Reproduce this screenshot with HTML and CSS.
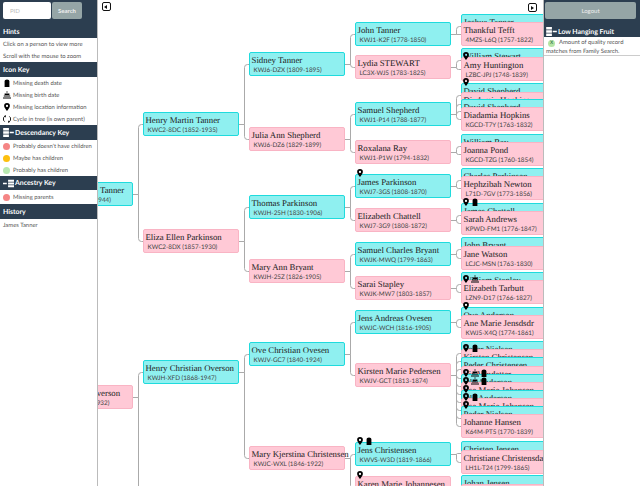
FILE: index.html
```html
<!DOCTYPE html>
<html lang="en">
<head>
    <meta charset="UTF-8">
    <title>Relative Finder</title>
    <link rel="stylesheet" href="styles.css">
</head>
<body>
    <svg class="sprite" xmlns="http://www.w3.org/2000/svg">
        <symbol id="i-pin" viewBox="0 0 8 10"><path fill-rule="evenodd" d="M4 0a3.6 3.6 0 0 1 3.6 3.6C7.600 5.800 5.200 8 4 10 2.800 8 .4 5.800 .4 3.600A3.600 3.600 0 0 1 4 0zm0 2.200a1.400 1.400 0 1 0 0 2.800 1.400 1.400 0 0 0 0-2.800z"/></symbol>
        <symbol id="i-death" viewBox="0 0 8 10"><path d="M1 10V2.500Q1 .5 4 .5t3 2V10z"/></symbol>
        <symbol id="i-birth" viewBox="0 0 10 10"><path d="M4.600 0h.8v2.500h-.8zM2 3h6v2H2zM1 5.500h8v1.500H1zM0 8h10v1.500H0z"/></symbol>
        <symbol id="i-cycle" viewBox="0 0 10 10"><path fill="none" stroke="#000" stroke-width="1.200" d="M2 8.200A4 4 0 0 1 2 1.800M8 1.800A4 4 0 0 1 8 8.200"/><path d="M3.500 0v3L1 1.500zM6.500 10V7L9 8.500z"/></symbol>
        <symbol id="i-desc" viewBox="0 0 13 11"><path d="M0 0h7v3H0zM0 4h7v3H0zM0 8h7v3H0zM8 4.500h5v1.800H8z"/></symbol>
        <symbol id="i-anc" viewBox="0 0 13 9"><path d="M0 3.600h4.500v1.800H0zM6 0h7v2.500H6zM6 3.300h7v2.500H6zM6 6.500h7V9H6z"/></symbol>
    </svg>

    <div class="app">
        <aside class="sidebar sidebar-left">
            <div class="search">
                <input class="pid" type="text" placeholder="PID">
                <button class="btn">Search</button>
            </div>
            <h3 class="heading heading-hints">Hints</h3>
            <ul class="rows">
                <li>Click on a person to view more</li>
                <li>Scroll with the mouse to zoom</li>
            </ul>
            <h3 class="heading">Icon Key</h3>
            <ul class="rows">
                <li><svg class="key-icon"><use href="#i-death"/></svg>Missing death date</li>
                <li><svg class="key-icon"><use href="#i-birth"/></svg>Missing birth date</li>
                <li><svg class="key-icon"><use href="#i-pin"/></svg>Missing location information</li>
                <li><svg class="key-icon"><use href="#i-cycle"/></svg>Cycle in tree (is own parent)</li>
            </ul>
            <h3 class="heading"><svg class="head-icon"><use href="#i-desc"/></svg>Descendancy Key</h3>
            <ul class="rows">
                <li><span class="dot red"></span>Probably doesn't have children</li>
                <li><span class="dot yellow"></span>Maybe has children</li>
                <li><span class="dot green"></span>Probably has children</li>
            </ul>
            <h3 class="heading heading-ancestry"><svg class="head-icon"><use href="#i-anc"/></svg>Ancestry Key</h3>
            <ul class="rows rows-ancestry">
                <li><span class="dot red"></span>Missing parents</li>
            </ul>
            <h3 class="heading">History</h3>
            <ul class="rows">
                <li>James Tanner</li>
            </ul>
        </aside>

        <main class="canvas" id="canvas">
            <svg class="links" id="links"></svg>
            <button class="pager pager-left"></button>
            <button class="pager pager-right"></button>
        </main>

        <aside class="sidebar sidebar-right">
            <div class="search">
                <button class="btn btn-wide">Logout</button>
            </div>
            <h3 class="heading heading-fruit"><svg class="head-icon"><use href="#i-desc"/></svg>Low Hanging Fruit</h3>
            <p class="fruit"><span class="fruit-badge">X</span>Amount of quality record matches from Family Search.</p>
        </aside>
    </div>

    <script src="tree.js"></script>
</body>
</html>
```

FILE: styles.css
```css
* {
    margin: 0;
    padding: 0;
    box-sizing: border-box;
}

body {
    background: #fff;
    font-family: "Lato", sans-serif;
    text-rendering: geometricPrecision;
    overflow: hidden;
}

.sprite {
    display: none;
}

.app {
    display: flex;
    width: 640px;
    height: 486px;
}

/* Sidebars */
.sidebar {
    flex: none;
    width: 97px;
    background: #fff;
    color: #555;
    font-size: 5.900px;
}

.sidebar-left {
    width: 98px;
    border-right: 1px solid #bbb;
}

.sidebar-right {
    border-left: 1px solid #bbb;
}

.search {
    display: flex;
    gap: 1px;
    height: 26px;
    padding: 2px 3px 0;
    background: #2c3e50;
}

.sidebar-right .search {
    padding: 2px 3px 0 1px;
}

.pid {
    width: 48px;
    height: 17px;
    padding-left: 7px;
    border: 0;
    border-radius: 2px;
    background: #fff;
    font: 6px "Lato", sans-serif;
}

.pid::placeholder {
    color: #bbb;
}

.btn {
    width: 30px;
    height: 17px;
    border: 0;
    border-radius: 2px;
    background: #95a5a6;
    color: #eee;
    font: bold 6px "Lato", sans-serif;
}

.btn-wide {
    width: 91px;
    font-weight: 400;
}

.heading {
    display: flex;
    align-items: center;
    height: 15px;
    padding-left: 3px;
    background: #2c3e50;
    color: #fff;
    font-size: 6.900px;
    font-weight: 700;
}

.heading-hints {
    height: 12px;
}

.heading-ancestry {
    height: 14px;
}

.heading-fruit {
    height: 11px;
    padding-left: 2px;
}

.head-icon {
    flex: none;
    width: 11px;
    height: 9px;
    margin-right: 1px;
    fill: #fff;
}

.rows {
    list-style: none;
    padding-left: 3px;
}

.rows li {
    display: flex;
    align-items: center;
    height: 12px;
    white-space: nowrap;
}

.rows-ancestry li {
    height: 14px;
}

.key-icon {
    flex: none;
    width: 8px;
    height: 8px;
    margin-right: 2px;
}

.dot {
    flex: none;
    width: 7px;
    height: 7px;
    margin-right: 3px;
    border-radius: 50%;
}

.red {
    background: #f58585;
}

.yellow {
    background: #fdc00f;
}

.green {
    background: #b8e8b0;
}

.fruit {
    height: 19px;
    padding: 1px 0 0 2px;
    line-height: 9.400px;
    border-bottom: 1px solid #ccc;
}

.fruit-badge {
    display: inline-block;
    width: 7px;
    height: 7px;
    margin: 0 4px 0 2px;
    border-radius: 50%;
    background: #b5e5a5;
    color: #264;
    font-size: 5px;
    line-height: 7px;
    text-align: center;
}

/* Tree */
.canvas {
    position: relative;
    flex: 1;
    height: 486px;
    overflow: hidden;
}

.links {
    position: absolute;
    top: 0;
    left: 0;
    width: 100%;
    height: 100%;
}

.links path {
    fill: none;
    stroke: #aaa;
    stroke-width: 1;
}

.person {
    position: absolute;
    width: 96px;
    height: 24px;
    padding: 1px 0 0 1.500px;
    border: 1px solid;
    border-radius: 2px;
    white-space: nowrap;
}

.male {
    background: #8ff0f0;
    border-color: #1fdbdd;
}

.female {
    background: #ffc9d6;
    border-color: #f9b4c4;
}

.person-name {
    color: #222;
    font-family: "Liberation Serif", serif;
    font-size: 8.800px;
    line-height: 12px;
}

.person-id {
    padding-left: 2px;
    color: #444;
    font-size: 6.300px;
    line-height: 9px;
}

.badges {
    position: absolute;
    top: -6px;
    left: 0;
    display: flex;
    gap: 1px;
}

.badge {
    width: 8px;
    height: 8px;
}

.pager {
    position: absolute;
    top: 2px;
    width: 9px;
    height: 9px;
    border: 1px solid #111;
    border-radius: 2px;
    background: #fff;
}

.pager::after {
    content: "";
    position: absolute;
    top: 1.500px;
    border: 2px solid transparent;
}

.pager-left {
    left: 4px;
}

.pager-left::after {
    left: -1px;
    border-right: 3px solid #111;
}

.pager-right {
    left: 430px;
    top: 3px;
}

.pager-right::after {
    left: 2px;
    border-left: 3px solid #111;
}
```

FILE: tree.js
```js
const CANVAS_X = 98;
const GEN_X = [37, 143, 249, 355, 461];
const CARD_H = 24;

// [top, name, id, icons, parents]
const roots = [
  [182, "James Lawrence Tanner", "KWC2-8D9 (1880-1944)", "", [
    [112, "Henry Martin Tanner", "KWC2-8DC (1852-1935)", "", [
      [52, "Sidney Tanner", "KWJ6-DZX (1809-1895)", "", [
        [22, "John Tanner", "KWJ1-K2F (1778-1850)", "", [
          [14, "Joshua Tanner", "", ""],
          [22, "Thankful Tefft", "4MZS-L6Q (1757-1822)", ""],
        ]],
        [55, "Lydia STEWART", "LC3X-WJ5 (1783-1825)", "", [
          [48, "William Stewart", "", ""],
          [57, "Amy Huntington", "LZBC-JPJ (1748-1839)", "p"],
        ]],
      ]],
      [127, "Julia Ann Shepherd", "KWJ6-DZ6 (1829-1899)", "", [
        [102, "Samuel Shepherd", "KWJ1-P14 (1788-1877)", "", [
          [83, "David Shepherd", "", "p"],
          [92, "Diadamia Hopkins", "", ""],
          [99, "David Shepherd", "", ""],
          [107, "Diadamia Hopkins", "KGCD-T7Y (1763-1832)", ""],
        ]],
        [140, "Roxalana Ray", "KWJ1-P1W (1794-1832)", "", [
          [134, "William Ray", "", ""],
          [142, "Joanna Pond", "KGCD-TZG (1760-1854)", ""],
        ]],
      ]],
    ]],
    [229, "Eliza Ellen Parkinson", "KWC2-8DX (1857-1930)", "", [
      [195, "Thomas Parkinson", "KWJH-25H (1830-1906)", "", [
        [174, "James Parkinson", "KWJ7-3GS (1808-1870)", "p", [
          [168, "Charles Parkinson", "", ""],
          [176, "Hephzibah Newton", "L71D-7GV (1773-1856)", ""],
        ]],
        [208, "Elizabeth Chattell", "KWJ7-3G9 (1808-1872)", "", [
          [203, "James Chattell", "", "pd"],
          [211, "Sarah Andrews", "KPWD-FM1 (1776-1847)", ""],
        ]],
      ]],
      [259, "Mary Ann Bryant", "KWJH-25Z (1826-1905)", "", [
        [242, "Samuel Charles Bryant", "KWJK-MWQ (1799-1863)", "", [
          [237, "John Bryant", "", ""],
          [246, "Jane Watson", "LCJC-MSN (1763-1830)", ""],
        ]],
        [276, "Sarai Stapley", "KWJK-MW7 (1803-1857)", "", [
          [272, "William Stapley", "", ""],
          [280, "Elizabeth Tarbutt", "LZN9-D17 (1766-1827)", "pb"],
        ]],
      ]],
    ]],
  ]],
  [385, "Marian Annie Overson", "KWJH-XF2 (1870-1932)", "", [
    [360, "Henry Christian Overson", "KWJH-XFD (1868-1947)", "", [
      [342, "Ove Christian Ovesen", "KWJV-GC7 (1840-1924)", "", [
        [310, "Jens Andreas Ovesen", "KWJC-WCH (1816-1905)", "", [
          [307, "Ove Anderson", "", "p"],
          [315, "Ane Marie Jensdsdr", "KWJ5-X4Q (1774-1861)", ""],
        ]],
        [363, "Kirsten Marie Pedersen", "KWJV-GCT (1813-1874)", "", [
          [341, "Peder Nielsen", "", ""],
          [349, "Kirsten Christensen", "", "pd"],
          [357, "Peder Christensen", "", ""],
          [366, "Lia Vandetter", "", ""],
          [374, "Ole Anderson", "", "pbd"],
          [382, "Ilse Marie Johansen", "", "pbd"],
          [390, "Ole Anderson", "", "p"],
          [398, "Ilse Marie Johansen", "", "pd"],
          [406, "Peder Nielsen", "", "p"],
          [414, "Johanne Hansen", "K64M-PT5 (1770-1839)", ""],
        ]],
      ]],
      [446, "Mary Kjerstina Christensen", "KWJC-WXL (1846-1922)", "", [
        [442, "Jens Christensen", "KWVS-W3D (1819-1866)", "pd", [
          [441, "Christen Jensen", "", ""],
          [450, "Christiane Christensdatter", "LH1L-T24 (1799-1865)", ""],
        ]],
        [476, "Karen Marie Johannesen", "", "p", [
          [475, "Johan Jensen", "", ""],
          [484, "Maren Jensdatter", "", ""],
        ]],
      ]],
    ]],
    [520, "", "", ""],
  ]],
];

const ICONS = { p: "i-pin", b: "i-birth", d: "i-death" };

const canvas = document.querySelector("#canvas");
const links = document.querySelector("#links");

function createCard(person, gen, index) {
  const [top, name, id, icons] = person;
  const card = document.createElement("div");
  card.classList.add("person", index % 2 ? "female" : "male");
  card.style.left = GEN_X[gen] - CANVAS_X + "px";
  card.style.top = top + "px";

  const nameEl = document.createElement("div");
  nameEl.className = "person-name";
  nameEl.innerText = name;

  const idEl = document.createElement("div");
  idEl.className = "person-id";
  idEl.innerText = id;

  card.appendChild(nameEl);
  card.appendChild(idEl);

  if (icons) {
    const badges = [...icons]
      .map((i) => `<svg class="badge"><use href="#${ICONS[i]}"/></svg>`)
      .join("");
    card.insertAdjacentHTML("beforeend", `<div class="badges">${badges}</div>`);
  }

  canvas.appendChild(card);
}

// Elbow from a person's right edge out to each parent's left edge
function linkPath(person, gen) {
  const startX = GEN_X[gen] + 96 - CANVAS_X;
  const endX = GEN_X[gen + 1] - CANVAS_X;
  const midX = endX - 4.5;
  const startY = person[0] + CARD_H / 2 + 0.5;

  return person[4]
    .map((parent) => {
      const endY = parent[0] + CARD_H / 2 + 0.5;
      const r = Math.min(3, Math.abs(endY - startY));
      const bend = endY > startY ? endY - r : endY + r;
      return `M${startX} ${startY}H${midX}V${bend}Q${midX} ${endY} ${midX + r} ${endY}H${endX}`;
    })
    .join("");
}

function drawLinks(person, gen) {
  const parents = person[4];
  if (parents) {
    links.insertAdjacentHTML("beforeend", `<path d="${linkPath(person, gen)}"/>`);
    parents.forEach((parent) => drawLinks(parent, gen + 1));
  }
}

function drawCards(person, gen, index) {
  createCard(person, gen, index);
  (person[4] || []).forEach((parent, i) => drawCards(parent, gen + 1, i));
}

roots.forEach((person) => drawLinks(person, 0));
roots.forEach((person, i) => drawCards(person, 0, i));
```
